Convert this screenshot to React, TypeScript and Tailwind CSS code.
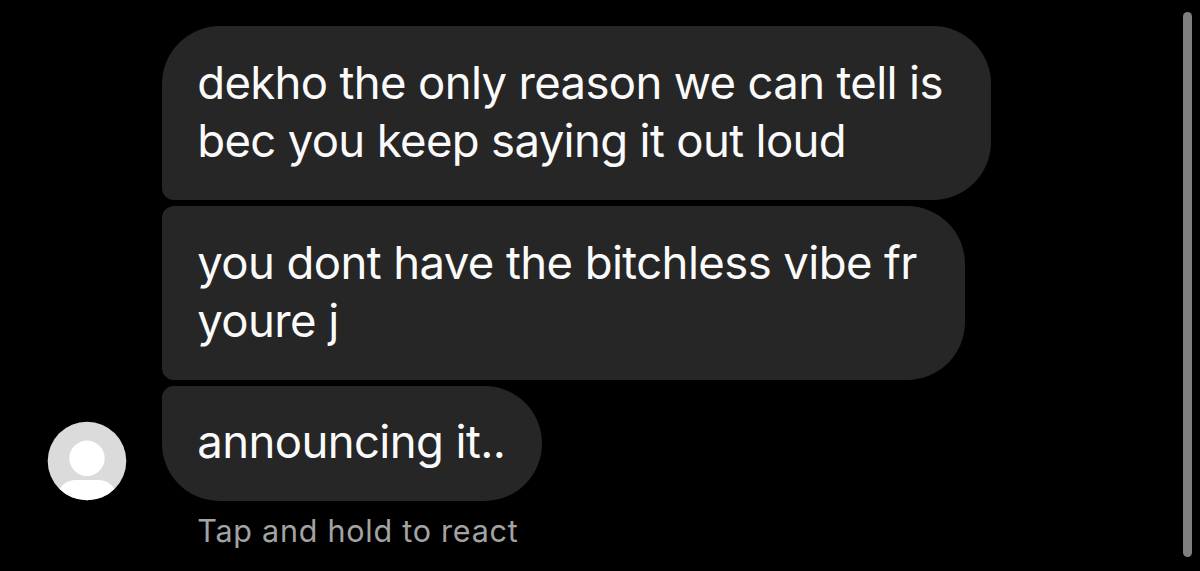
interface MessageProps {
  readonly lines: readonly string[]
  readonly className: string
}

const messages: readonly MessageProps[] = [
  {
    lines: ['dekho the only reason we can tell is', 'bec you keep saying it out loud'],
    className: 'h-[174px] w-[829px] rounded-[58px] rounded-bl-[12px] pt-7 tracking-[-0.66px]',
  },
  {
    lines: ['you dont have the bitchless vibe fr', 'youre j'],
    className: 'h-[173.5px] w-[803px] rounded-r-[58px] rounded-l-[12px] pt-[27.5px] tracking-[-0.6px]',
  },
  {
    lines: ['announcing it..'],
    className: 'h-[115.5px] w-[379.5px] rounded-[58px] rounded-tl-[12px] pt-[27px] tracking-[-0.6px]',
  },
]

function Message({ lines, className }: MessageProps) {
  return (
    <div className={`bg-[#262626] pl-[35.2px] text-[45.5px] leading-[58px] text-[#fafafa] ${className}`}>
      {lines.map((line) => (
        <p key={line} className="whitespace-nowrap">
          {line}
        </p>
      ))}
    </div>
  )
}

function Avatar() {
  return (
    <svg className="size-20" viewBox="0 0 80 80" aria-hidden="true">
      <defs>
        <clipPath id="avatar">
          <circle cx="40" cy="40" r="39.3" />
        </clipPath>
      </defs>
      <g clipPath="url(#avatar)">
        <rect width="80" height="80" fill="#dbdbdb" />
        <circle cx="40" cy="37.3" r="17.7" fill="#fff" />
        <path d="M10 80V74C13 64 20 59 29 59H51C60 59 67 64 70 74V80Z" fill="#fff" />
      </g>
    </svg>
  )
}

export default function App() {
  return (
    <main className="flex h-[571px] w-[1200px] overflow-hidden bg-black font-['Inter',sans-serif]">
      <div className="flex w-[162px] items-end pb-[70px] pl-[47px]">
        <Avatar />
      </div>
      <div className="flex flex-1 flex-col items-start gap-1.5 pt-[26px]">
        {messages.map((message) => (
          <Message key={message.lines[0]} {...message} />
        ))}
        <p className="pl-[35.2px] pt-1 text-[30.5px] leading-10 tracking-[0.76px] text-[#a3a3a3]">
          Tap and hold to react
        </p>
      </div>
      <div className="mr-2 mt-3 h-[545px] w-[9px] rounded-full bg-[#7f7f7f]" />
    </main>
  )
}
